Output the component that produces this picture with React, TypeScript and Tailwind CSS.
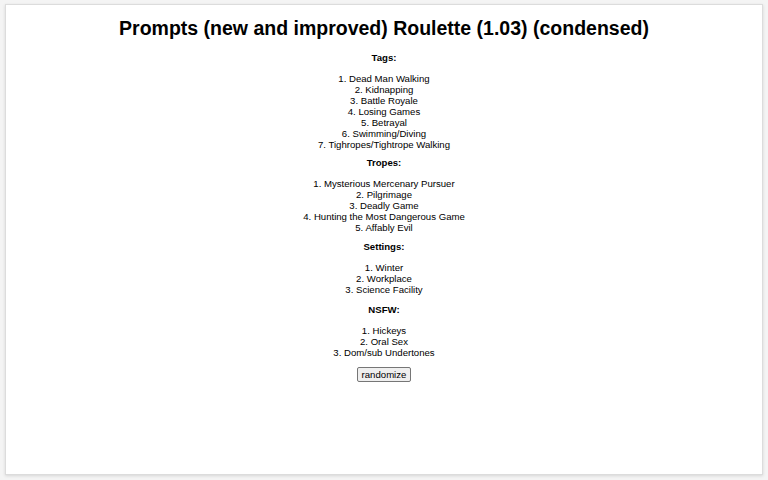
import React from "react";

const sections: { title: string; items: string[]; gap: string }[] = [
  {
    title: "Tags:",
    gap: "",
    items: [
      "Dead Man Walking",
      "Kidnapping",
      "Battle Royale",
      "Losing Games",
      "Betrayal",
      "Swimming/Diving",
      "Tighropes/Tightrope Walking",
    ],
  },
  {
    title: "Tropes:",
    gap: "mt-[7px]",
    items: [
      "Mysterious Mercenary Pursuer",
      "Pilgrimage",
      "Deadly Game",
      "Hunting the Most Dangerous Game",
      "Affably Evil",
    ],
  },
  {
    title: "Settings:",
    gap: "mt-[8px]",
    items: ["Winter", "Workplace", "Science Facility"],
  },
  {
    title: "NSFW:",
    gap: "mt-[9px]",
    items: ["Hickeys", "Oral Sex", "Dom/sub Undertones"],
  },
];

export default function App() {
  return (
    <div
      className="w-[768px] h-[480px] bg-[#f4f4f4] pt-[4px] px-[5px] text-black"
      style={{ fontFamily: '"Liberation Sans", Arial, sans-serif' }}
    >
      <div className="h-[471px] bg-white border border-[#dcdcdc] shadow-[0_1px_3px_rgba(0,0,0,0.12)] flex flex-col items-center pt-[11px]">
        <h1 className="text-[19.5px] leading-[24px] font-bold">
          Prompts (new and improved) Roulette (1.03) (condensed)
        </h1>
        <div className="mt-[12px] flex flex-col items-center">
          {sections.map((s) => (
            <div key={s.title} className={`flex flex-col items-center ${s.gap}`}>
              <div className="text-[9.6px] leading-[11px] font-bold mb-[10px]">{s.title}</div>
              <ol className="text-[9.6px] leading-[11px] text-center">
                {s.items.map((it, j) => (
                  <li key={it}>
                    {j + 1}. {it}
                  </li>
                ))}
              </ol>
            </div>
          ))}
          <button className="mt-[9px] h-[15px] px-[4px] text-[9.6px] leading-[13px] bg-[#efefef] border border-[#767676] rounded-[2px]">
            randomize
          </button>
        </div>
      </div>
    </div>
  );
}
